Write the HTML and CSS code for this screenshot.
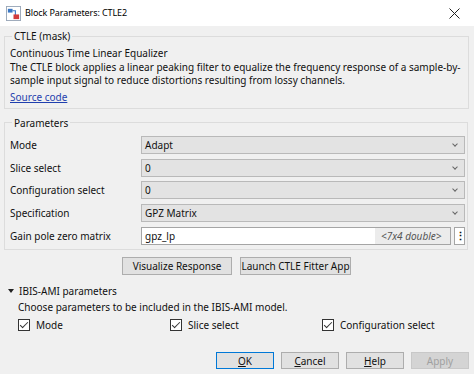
FILE: index.html
```html
<!DOCTYPE html>
<html lang="en">
<head>
  <meta charset="UTF-8" />
  <title>Block Parameters: CTLE2</title>
  <link rel="stylesheet" href="styles.css">
</head>
<body>
  <div class="window">
    <div class="titlebar">
      <svg class="app-icon" width="15" height="15" viewBox="0 0 16 16">
        <rect x="0.5" y="0.5" width="15" height="15" fill="#fff" stroke="#9aa7b8"/>
        <rect x="2" y="3" width="5" height="4" fill="#3b78c4"/>
        <path d="M7 5 H10 V10" fill="none" stroke="#3b78c4" stroke-width="1.2"/>
        <rect x="8" y="9" width="6" height="5" fill="#d23b3b"/>
      </svg>
      <span class="title">Block Parameters: CTLE2</span>
      <svg class="close" width="11" height="11" viewBox="0 0 11 11">
        <path d="M0.5 0.5 L10.5 10.5 M10.5 0.5 L0.5 10.5" stroke="#222" stroke-width="1"/>
      </svg>
    </div>

    <div class="content">
      <fieldset class="group mask">
        <legend>CTLE (mask)</legend>
        <p class="desc">Continuous Time Linear Equalizer<br>
        The CTLE block applies a linear peaking filter to equalize the frequency response of a sample-by-<br>sample input signal to reduce distortions resulting from lossy channels.</p>
        <a class="link" href="#">Source code</a>
      </fieldset>

      <fieldset class="group params">
        <legend>Parameters</legend>
        <div class="row">
          <label>Mode</label>
          <div class="dropdown">Adapt<span class="chev"></span></div>
        </div>
        <div class="row">
          <label>Slice select</label>
          <div class="dropdown">0<span class="chev"></span></div>
        </div>
        <div class="row">
          <label>Configuration select</label>
          <div class="dropdown">0<span class="chev"></span></div>
        </div>
        <div class="row">
          <label>Specification</label>
          <div class="dropdown">GPZ Matrix<span class="chev"></span></div>
        </div>
        <div class="row">
          <label>Gain pole zero matrix</label>
          <div class="edit-wrap">
            <div class="edit">gpz_lp<span class="hint">&lt;7x4 double&gt;</span></div>
            <div class="more">&#8942;</div>
          </div>
        </div>
      </fieldset>

      <div class="tools">
        <button class="btn viz">Visualize Response</button>
        <button class="btn fit">Launch CTLE Fitter App</button>
      </div>

      <div class="section">
        <div class="section-head"><span class="tri"></span>IBIS-AMI parameters</div>
        <div class="section-body">
          <div class="note">Choose parameters to be included in the IBIS-AMI model.</div>
          <div class="checks">
            <div class="check"><span class="box"></span>Mode</div>
            <div class="check"><span class="box"></span>Slice select</div>
            <div class="check"><span class="box"></span>Configuration select</div>
          </div>
        </div>
      </div>
    </div>

    <div class="footer">
      <button class="btn dlg default"><u>O</u>K</button>
      <button class="btn dlg"><u>C</u>ancel</button>
      <button class="btn dlg"><u>H</u>elp</button>
      <button class="btn dlg disabled">Apply</button>
    </div>
  </div>
</body>
</html>
```

FILE: styles.css
```css
body {
  margin: 0;
  background: #f0f0f0;
  font-family: "Noto Sans", "Open Sans", sans-serif;
  font-size: 10px;
  line-height: 14px;
  color: #111;
}
.window {
  width: 474px;
  height: 374px;
  display: flex;
  flex-direction: column;
  background: #f0f0f0;
}
.titlebar {
  height: 26px;
  background: #fff;
  display: flex;
  align-items: center;
  padding: 0 0 0 6px;
  box-sizing: border-box;
}
.app-icon {
  margin-right: 4px;
}
.title {
  flex: 1;
  color: #000;
  font-size: 9px;
  letter-spacing: -0.1px;
}
.close {
  margin-right: 14px;
}
.content {
  padding: 3px 5px 0 4px;
}
.group {
  border: 1px solid #dcdcdc;
  margin: 0;
  padding: 0 4px 4px 5px;
}
.group legend {
  padding: 0 2px;
  margin-left: 2px;
}
.desc {
  margin: 4px 0 0;
  line-height: 13.5px;
  white-space: nowrap;
}
.link {
  display: inline-block;
  margin-top: 2px;
  color: #1f3fae;
}
.params {
  margin: 7px 1px 0 0;
  padding: 4px 2px 2px 5px;
}
.row {
  display: flex;
  align-items: center;
  height: 22.8px;
}
.row label {
  width: 131px;
}
.dropdown {
  flex: 1;
  height: 18px;
  box-sizing: border-box;
  border: 1px solid #b9b9b9;
  background: #e3e3e3;
  display: flex;
  align-items: center;
  padding-left: 3px;
  position: relative;
}
.chev {
  position: absolute;
  right: 7px;
  top: 5px;
  width: 3px;
  height: 3px;
  border-right: 1px solid #666;
  border-bottom: 1px solid #666;
  transform: rotate(45deg);
}
.edit-wrap {
  flex: 1;
  display: flex;
  gap: 3px;
  height: 18px;
}
.edit {
  flex: 1;
  border: 1px solid #a5a5a5;
  background: #fff;
  display: flex;
  align-items: center;
  padding-left: 3px;
  box-sizing: border-box;
}
.hint {
  margin-left: auto;
  background: #ececec;
  height: 100%;
  width: 75px;
  box-sizing: border-box;
  display: flex;
  align-items: center;
  padding-left: 6px;
  font-style: italic;
  color: #555;
  white-space: nowrap;
}
.more {
  width: 9px;
  border: 1px solid #a5a5a5;
  background: #fff;
  text-align: center;
  line-height: 16px;
  font-weight: bold;
  font-size: 11px;
}
.tools {
  display: flex;
  justify-content: center;
  gap: 8px;
  margin-top: 7px;
}
.btn {
  font-family: inherit;
  font-size: 10px;
  line-height: 14px;
  background: #e1e1e1;
  border: 1px solid #adadad;
  height: 18px;
  padding: 0;
  color: #111;
}
.viz {
  width: 110px;
}
.fit {
  width: 111px;
}
.section {
  margin-top: 8px;
}
.section-head {
  display: flex;
  align-items: center;
  padding-left: 4px;
  height: 16px;
}
.tri {
  width: 0;
  height: 0;
  border-left: 3px solid transparent;
  border-right: 3px solid transparent;
  border-top: 4px solid #222;
  margin-right: 5px;
}
.section-body {
  padding-left: 14px;
}
.note {
  line-height: 16px;
}
.checks {
  display: grid;
  grid-template-columns: 152px 152px 1fr;
  margin-top: 2px;
  line-height: 16px;
}
.check {
  display: flex;
  align-items: center;
}
.box {
  width: 12px;
  height: 12px;
  border: 1px solid #333;
  box-sizing: border-box;
  margin-right: 6px;
  position: relative;
  background: #fff;
}
.box::after {
  content: "";
  position: absolute;
  left: 3px;
  top: 0;
  width: 3px;
  height: 7px;
  border-right: 1px solid #333;
  border-bottom: 1px solid #333;
  transform: rotate(45deg);
}
.footer {
  margin-top: auto;
  display: flex;
  justify-content: flex-end;
  gap: 7px;
  padding: 0 5px 5px 0;
}
.dlg {
  width: 58px;
  height: 17px;
}
.default {
  border: 1px solid #0078d7;
}
.disabled {
  color: #a0a0a0;
  background: #d4d4d4;
  border-color: #c8c8c8;
}
```
